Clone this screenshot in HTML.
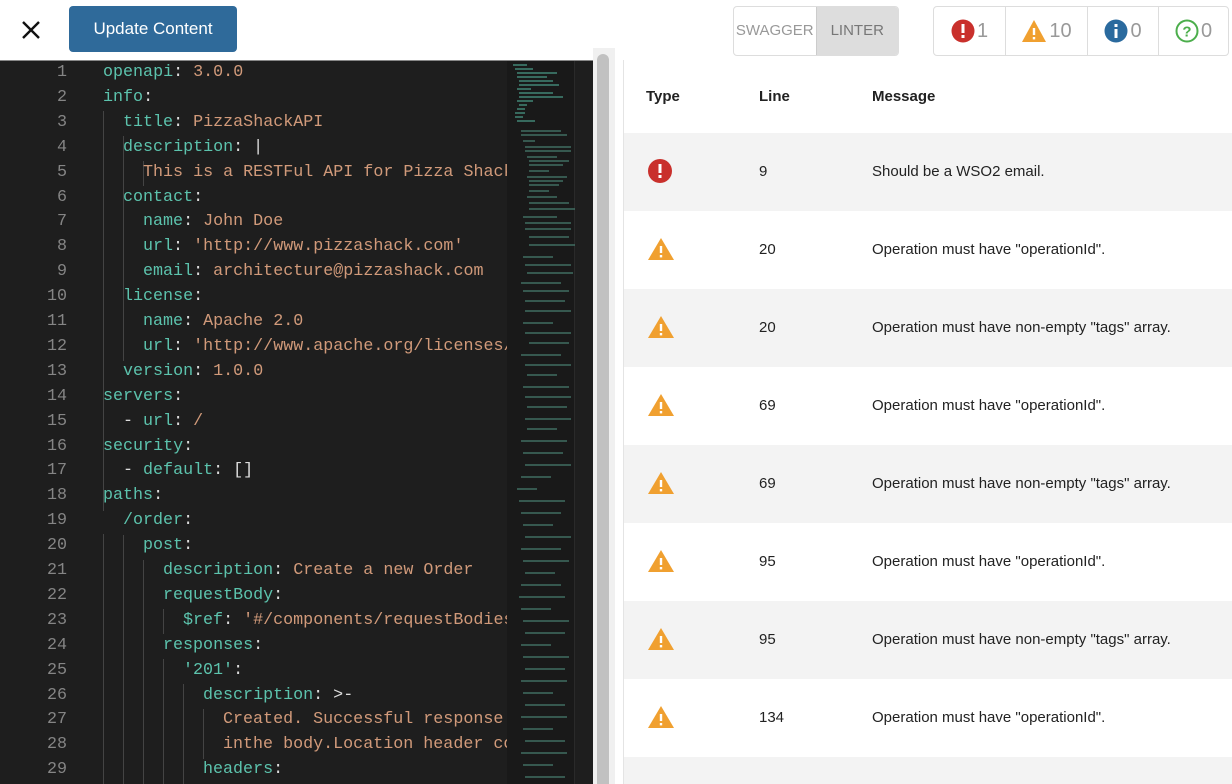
<!DOCTYPE html>
<html style="width:1232px;height:784px;overflow:hidden"><head><meta charset="utf-8"><style>
*{margin:0;padding:0;box-sizing:border-box}
body{width:1232px;height:784px;overflow:hidden;background:#fff;font-family:"Liberation Sans",sans-serif;position:relative}
.top{position:absolute;left:0;top:0;width:1232px;height:60px;background:#fff}
.btn{position:absolute;left:69px;top:6px;width:168px;height:46px;background:#2f6a9a;border-radius:4px;color:#fff;font-size:17px;line-height:46px;text-align:center}
.tog{position:absolute;left:733px;top:6px;width:166px;height:50px;border:1px solid #ddd;border-radius:4px;display:flex;overflow:hidden}
.tog div{flex:1;font-size:15px;line-height:48px;text-align:center;color:#999}
.tog div+div{background:#ddd;color:#777;border-left:1px solid #ccc}
.cnt{position:absolute;left:933px;top:6px;width:296px;height:50px;border:1px solid #ddd;border-radius:4px;display:flex}
.cnt div{height:48px;display:flex;align-items:center;justify-content:center;font-size:20px;color:#999;border-left:1px solid #ddd;gap:2px}
.cnt div:first-child{border-left:none}
.ed{position:absolute;left:0;top:60px;width:593px;height:724px;background:#1e1e1e;border-top:1px solid #888;overflow:hidden}
.ln{position:absolute;left:0;width:67px;text-align:right;color:#858585}
.code{position:absolute;left:0;top:0;width:507px;height:724px;overflow:hidden;font-family:"Liberation Mono",monospace;font-size:16.7px;line-height:24.9px;white-space:pre}
.row{position:absolute;height:24.9px;left:0}
.k{color:#5cc3ad}.s{color:#d19a7a}.p{color:#ddd}
.g{position:absolute;width:1px;background:#444}
.mini{position:absolute;left:507px;top:0;width:68px;height:724px;background:#191919;border-right:1px solid #2a2a2a}
.sb{position:absolute;left:593px;top:48px;width:22px;height:736px;background:#f0f0f0;overflow:hidden}
.sb div{position:absolute;left:4px;top:6px;width:12px;height:740px;background:#c1c1c1;border-radius:6px}
.rp{position:absolute;left:623px;top:60px;width:609px;height:724px;overflow:hidden;border-left:1px solid #e4e4e4;font-family:"Liberation Sans",sans-serif;font-size:15px;color:#222}
.tr{position:absolute;left:0;width:609px;height:78px}
.tr.gr{background:#f3f3f3}
.tr span{position:absolute;top:30px}
.c1{left:22px}.c2{left:135px}.c3{left:248px}
.h span{font-weight:bold;top:28px}
.ic{position:absolute;left:23px;top:25px}
</style></head><body>
<div class="top">
<svg style="position:absolute;left:21px;top:20px" width="20" height="20"><path d="M2 2L18 18M18 2L2 18" stroke="#111" stroke-width="2.4"/></svg>
<div class="btn">Update Content</div>
<div class="tog"><div>SWAGGER</div><div>LINTER</div></div>
<div class="cnt">
<div style="width:71px"><svg width="24" height="24"><circle cx="12" cy="12" r="11.5" fill="#c9302c"/><rect x="10.5" y="5" width="3" height="9" fill="#fff"/><rect x="10.5" y="16" width="3" height="3" fill="#fff"/></svg>1</div>
<div style="width:82px"><svg width="26" height="24"><path d="M13 1L25 23H1Z" fill="#f0a030"/><rect x="11.8" y="9" width="2.4" height="7" fill="#fff"/><rect x="11.8" y="18" width="2.4" height="2.4" fill="#fff"/></svg>10</div>
<div style="width:71px"><svg width="24" height="24"><circle cx="12" cy="12" r="11.5" fill="#2a6a9e"/><rect x="10.5" y="10" width="3" height="9" fill="#fff"/><rect x="10.5" y="5" width="3" height="3" fill="#fff"/></svg>0</div>
<div style="width:70px"><svg width="24" height="24"><circle cx="12" cy="12" r="10.5" fill="none" stroke="#4cae4c" stroke-width="2"/><text x="12" y="17.5" font-size="15" text-anchor="middle" fill="#4cae4c" font-family="Liberation Sans" font-weight="bold">?</text></svg>0</div>
</div>
</div>
<div class="ed">
<div class="g" style="left:103px;top:50px;height:400px"></div>
<div class="g" style="left:103px;top:473px;height:260px"></div>
<div class="g" style="left:123px;top:75px;height:225px"></div>
<div class="g" style="left:143px;top:100px;height:25px"></div>
<div class="g" style="left:123px;top:474px;height:260px"></div>
<div class="g" style="left:143px;top:499px;height:240px"></div>
<div class="g" style="left:163px;top:548px;height:25px"></div>
<div class="g" style="left:163px;top:598px;height:140px"></div>
<div class="g" style="left:183px;top:623px;height:120px"></div>
<div class="g" style="left:203px;top:648px;height:50px"></div>
<div class="code">
<div class="row" style="top:0"><span class="ln">1</span><span style="position:absolute;left:103px"><span class="k">openapi</span><span class="p">: </span><span class="s">3.0.0</span></span></div>
<div class="row" style="top:24.9px"><span class="ln">2</span><span style="position:absolute;left:103px"><span class="k">info</span><span class="p">:</span></span></div>
<div class="row" style="top:49.8px"><span class="ln">3</span><span style="position:absolute;left:123px"><span class="k">title</span><span class="p">: </span><span class="s">PizzaShackAPI</span></span></div>
<div class="row" style="top:74.7px"><span class="ln">4</span><span style="position:absolute;left:123px"><span class="k">description</span><span class="p">: |</span></span></div>
<div class="row" style="top:99.6px"><span class="ln">5</span><span style="position:absolute;left:143px"><span class="s">This is a RESTFul API for Pizza Shack online</span></span></div>
<div class="row" style="top:124.5px"><span class="ln">6</span><span style="position:absolute;left:123px"><span class="k">contact</span><span class="p">:</span></span></div>
<div class="row" style="top:149.4px"><span class="ln">7</span><span style="position:absolute;left:143px"><span class="k">name</span><span class="p">: </span><span class="s">John Doe</span></span></div>
<div class="row" style="top:174.3px"><span class="ln">8</span><span style="position:absolute;left:143px"><span class="k">url</span><span class="p">: </span><span class="s">'http://www.pizzashack.com'</span></span></div>
<div class="row" style="top:199.2px"><span class="ln">9</span><span style="position:absolute;left:143px"><span class="k">email</span><span class="p">: </span><span class="s">architecture@pizzashack.com</span></span></div>
<div class="row" style="top:224.1px"><span class="ln">10</span><span style="position:absolute;left:123px"><span class="k">license</span><span class="p">:</span></span></div>
<div class="row" style="top:249px"><span class="ln">11</span><span style="position:absolute;left:143px"><span class="k">name</span><span class="p">: </span><span class="s">Apache 2.0</span></span></div>
<div class="row" style="top:273.9px"><span class="ln">12</span><span style="position:absolute;left:143px"><span class="k">url</span><span class="p">: </span><span class="s">'http://www.apache.org/licenses/LICENSE</span></span></div>
<div class="row" style="top:298.8px"><span class="ln">13</span><span style="position:absolute;left:123px"><span class="k">version</span><span class="p">: </span><span class="s">1.0.0</span></span></div>
<div class="row" style="top:323.7px"><span class="ln">14</span><span style="position:absolute;left:103px"><span class="k">servers</span><span class="p">:</span></span></div>
<div class="row" style="top:348.6px"><span class="ln">15</span><span style="position:absolute;left:123px"><span class="p">- </span><span class="k">url</span><span class="p">: </span><span class="s">/</span></span></div>
<div class="row" style="top:373.5px"><span class="ln">16</span><span style="position:absolute;left:103px"><span class="k">security</span><span class="p">:</span></span></div>
<div class="row" style="top:398.4px"><span class="ln">17</span><span style="position:absolute;left:123px"><span class="p">- </span><span class="k">default</span><span class="p">: []</span></span></div>
<div class="row" style="top:423.3px"><span class="ln">18</span><span style="position:absolute;left:103px"><span class="k">paths</span><span class="p">:</span></span></div>
<div class="row" style="top:448.2px"><span class="ln">19</span><span style="position:absolute;left:123px"><span class="k">/order</span><span class="p">:</span></span></div>
<div class="row" style="top:473.1px"><span class="ln">20</span><span style="position:absolute;left:143px"><span class="k">post</span><span class="p">:</span></span></div>
<div class="row" style="top:498px"><span class="ln">21</span><span style="position:absolute;left:163px"><span class="k">description</span><span class="p">: </span><span class="s">Create a new Order</span></span></div>
<div class="row" style="top:522.9px"><span class="ln">22</span><span style="position:absolute;left:163px"><span class="k">requestBody</span><span class="p">:</span></span></div>
<div class="row" style="top:547.8px"><span class="ln">23</span><span style="position:absolute;left:183px"><span class="k">$ref</span><span class="p">: </span><span class="s">'#/components/requestBodies/Order'</span></span></div>
<div class="row" style="top:572.7px"><span class="ln">24</span><span style="position:absolute;left:163px"><span class="k">responses</span><span class="p">:</span></span></div>
<div class="row" style="top:597.6px"><span class="ln">25</span><span style="position:absolute;left:183px"><span class="k">'201'</span><span class="p">:</span></span></div>
<div class="row" style="top:622.5px"><span class="ln">26</span><span style="position:absolute;left:203px"><span class="k">description</span><span class="p">: &gt;-</span></span></div>
<div class="row" style="top:647.4px"><span class="ln">27</span><span style="position:absolute;left:223px"><span class="s">Created. Successful response with</span></span></div>
<div class="row" style="top:672.3px"><span class="ln">28</span><span style="position:absolute;left:223px"><span class="s">inthe body.Location header contains</span></span></div>
<div class="row" style="top:697.2px"><span class="ln">29</span><span style="position:absolute;left:203px"><span class="k">headers</span><span class="p">:</span></span></div>
</div>
<div class="mini">
<svg width="68" height="724" style="position:absolute;left:0;top:0">
<g stroke-width="1.2">
<path d="M6 4h14M8 8h18M10 12h40M10 16h30M12 20h34M12 24h40M10 28h14M12 32h34M12 36h44M10 40h16M12 44h8M10 48h8M8 52h10M8 56h8M10 60h18" stroke="#4a9a88"/>
<path d="M14 70h40M14 74h46M16 80h12M18 86h46M18 90h46M20 96h30M22 100h40M22 104h34M22 110h20M20 116h40M22 120h34M22 124h30M22 130h20M20 136h30M22 142h40M22 148h46M16 156h34M18 162h46M18 168h46M22 176h40M22 184h46M16 196h30M18 204h46M20 212h46M14 222h40M16 230h46M18 240h40M18 250h46M16 262h30M18 272h46M22 282h40M14 294h40M18 304h46M20 314h30M16 326h46M18 336h46M20 346h40M18 358h46M20 368h30M14 380h46M16 392h40M18 404h46M14 416h30M10 428h20M12 440h46M14 452h40M16 464h30M18 476h46M14 488h40M16 500h46M18 512h30M14 524h40M12 536h46M14 548h30M16 560h46M18 572h40M14 584h30M16 596h46M18 608h40M14 620h46M16 632h30M18 644h40M14 656h46M16 668h30M18 680h40M14 692h46M16 704h30M18 716h40" stroke="#477f70"/>
</g></svg>
</div>
</div>
<div class="sb"><div></div></div>
<div class="rp">
<div class="tr h" style="top:0;height:73px"><span class="c1">Type</span><span class="c2">Line</span><span class="c3">Message</span></div>
<div class="tr gr" style="top:73px"><svg class="ic" width="26" height="26"><circle cx="13" cy="13" r="12" fill="#c9302c"/><rect x="11.5" y="6" width="3" height="9" fill="#fff"/><rect x="11.5" y="17" width="3" height="3" fill="#fff"/></svg><span class="c2">9</span><span class="c3">Should be a WSO2 email.</span></div>
<div class="tr" style="top:151px"><svg class="ic" width="28" height="26"><path d="M14 2L27 24H1Z" fill="#f0a030"/><rect x="12.8" y="10" width="2.4" height="7" fill="#fff"/><rect x="12.8" y="19" width="2.4" height="2.4" fill="#fff"/></svg><span class="c2">20</span><span class="c3">Operation must have "operationId".</span></div>
<div class="tr gr" style="top:229px"><svg class="ic" width="28" height="26"><path d="M14 2L27 24H1Z" fill="#f0a030"/><rect x="12.8" y="10" width="2.4" height="7" fill="#fff"/><rect x="12.8" y="19" width="2.4" height="2.4" fill="#fff"/></svg><span class="c2">20</span><span class="c3">Operation must have non-empty "tags" array.</span></div>
<div class="tr" style="top:307px"><svg class="ic" width="28" height="26"><path d="M14 2L27 24H1Z" fill="#f0a030"/><rect x="12.8" y="10" width="2.4" height="7" fill="#fff"/><rect x="12.8" y="19" width="2.4" height="2.4" fill="#fff"/></svg><span class="c2">69</span><span class="c3">Operation must have "operationId".</span></div>
<div class="tr gr" style="top:385px"><svg class="ic" width="28" height="26"><path d="M14 2L27 24H1Z" fill="#f0a030"/><rect x="12.8" y="10" width="2.4" height="7" fill="#fff"/><rect x="12.8" y="19" width="2.4" height="2.4" fill="#fff"/></svg><span class="c2">69</span><span class="c3">Operation must have non-empty "tags" array.</span></div>
<div class="tr" style="top:463px"><svg class="ic" width="28" height="26"><path d="M14 2L27 24H1Z" fill="#f0a030"/><rect x="12.8" y="10" width="2.4" height="7" fill="#fff"/><rect x="12.8" y="19" width="2.4" height="2.4" fill="#fff"/></svg><span class="c2">95</span><span class="c3">Operation must have "operationId".</span></div>
<div class="tr gr" style="top:541px"><svg class="ic" width="28" height="26"><path d="M14 2L27 24H1Z" fill="#f0a030"/><rect x="12.8" y="10" width="2.4" height="7" fill="#fff"/><rect x="12.8" y="19" width="2.4" height="2.4" fill="#fff"/></svg><span class="c2">95</span><span class="c3">Operation must have non-empty "tags" array.</span></div>
<div class="tr" style="top:619px"><svg class="ic" width="28" height="26"><path d="M14 2L27 24H1Z" fill="#f0a030"/><rect x="12.8" y="10" width="2.4" height="7" fill="#fff"/><rect x="12.8" y="19" width="2.4" height="2.4" fill="#fff"/></svg><span class="c2">134</span><span class="c3">Operation must have "operationId".</span></div>
<div class="tr gr" style="top:697px;height:27px"></div>
</div>
</body></html>
